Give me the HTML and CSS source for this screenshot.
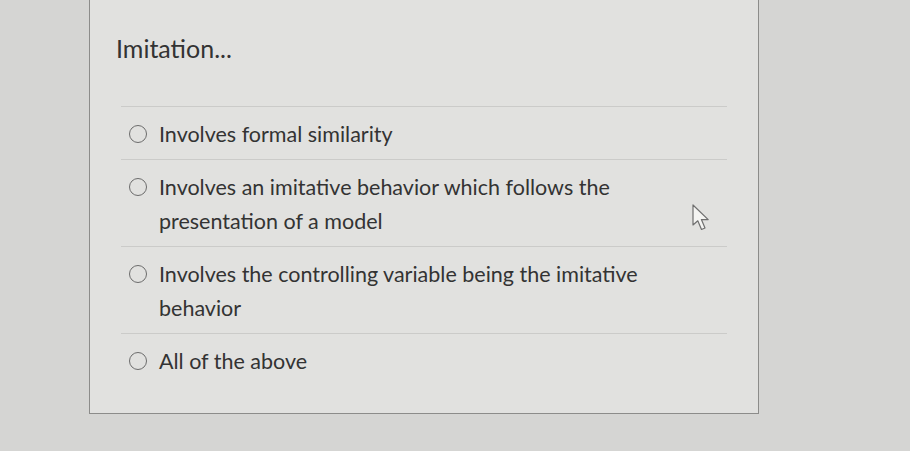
FILE: index.html
```html
<!DOCTYPE html>
<html lang="en">
<head>
    <meta charset="UTF-8">
    <meta name="viewport" content="width=device-width, initial-scale=1.0">
    <title>Quiz Question</title>
    <link rel="stylesheet" href="styles.css">
</head>
<body>
    <div class="question-card">
        <div class="question-text">Imitation...</div>

        <div class="answers">
            <label class="answer">
                <input type="radio" name="q1" value="a">
                <span class="answer-text">Involves formal similarity</span>
            </label>
            <label class="answer">
                <input type="radio" name="q1" value="b">
                <span class="answer-text">Involves an imitative behavior which follows the presentation of a model</span>
            </label>
            <label class="answer">
                <input type="radio" name="q1" value="c">
                <span class="answer-text">Involves the controlling variable being the imitative behavior</span>
            </label>
            <label class="answer">
                <input type="radio" name="q1" value="d">
                <span class="answer-text">All of the above</span>
            </label>
        </div>

        <!-- mouse pointer sitting over the card -->
        <svg class="pointer" width="20" height="29" viewBox="0 0 20 29">
            <path d="M1 1 L1 21 L5.8 16.8 L9.5 25.5 L13 24 L9.4 15.6 L16.2 15.6 Z" fill="#f4f4f2" stroke="#6f6f6f" stroke-width="1.2" stroke-linejoin="round"/>
        </svg>
    </div>
</body>
</html>
```

FILE: styles.css
```css
body {
    margin: 0;
    background: #d5d5d3;
    font-family: Lato, "Open Sans", sans-serif;
    color: #333;
}

.question-card {
    position: relative;
    box-sizing: border-box;
    width: 670px;
    height: 414px;
    margin-left: 89px;
    padding: 0 31px;
    background: #e1e1df;
    border: 1px solid #8c8c8a;
    border-top: none;
}

.question-text {
    margin-left: -5px;
    padding-top: 30px;
    font-size: 25px;
    line-height: 36px;
    margin-bottom: 40px;
}

.answer {
    display: flex;
    align-items: flex-start;
    padding: 10px 45px 8px 8px;
    border-top: 1px solid #cbcbc9;
    font-size: 21.5px;
    line-height: 34px;
    cursor: pointer;
}

.answer input[type="radio"] {
    appearance: none;
    flex: none;
    width: 18px;
    height: 18px;
    margin: 8px 12px 0 0;
    border: 1.7px solid #6c6c6c;
    border-radius: 50%;
    background: transparent;
}

.pointer {
    position: absolute;
    left: 602px;
    top: 204px;
}
```
